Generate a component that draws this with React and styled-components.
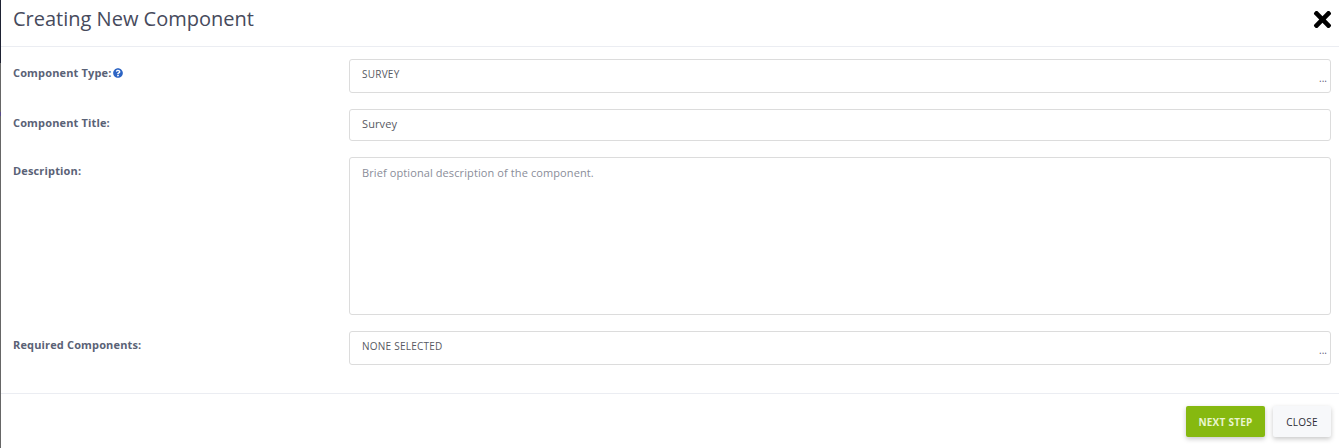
import React from 'react';
import styled, { createGlobalStyle } from 'styled-components';
import { FaTimes, FaQuestionCircle } from 'react-icons/fa';

const GlobalStyle = createGlobalStyle`
  html, body {
    margin: 0;
    padding: 0;
    height: 100%;
    overflow: hidden;
    background: #fff;
  }
  body {
    font-family: "Open Sans", "Liberation Sans", sans-serif;
  }
`;

const Backdrop = styled.div`
  height: 448px;
  padding-left: 1px;
  box-sizing: border-box;
  background: linear-gradient(
    to bottom,
    #1e2233 0,
    #1e2233 63px,
    #666 63px,
    #666 112px,
    #5a4a8a 112px,
    #5a4a8a 116px,
    #666 116px,
    #666 100%
  );
`;

const Modal = styled.div`
  height: 100%;
  background: #fff;
  display: flex;
  flex-direction: column;
`;

const Header = styled.div`
  height: 47px;
  flex: none;
  box-sizing: border-box;
  display: flex;
  align-items: center;
  justify-content: space-between;
  padding: 0 0 8px 12px;
  border-bottom: 1px solid #ebedf2;
`;

const Title = styled.h5`
  margin: 0;
  font-size: 20px;
  font-weight: 400;
  line-height: 38px;
  color: #464a5c;
`;

const CloseIcon = styled.button`
  border: 0;
  padding: 0;
  width: 34px;
  justify-content: center;
  background: none;
  display: flex;
  color: #000;
  font-size: 25px;
`;

const Body = styled.div`
  flex: 1;
  padding: 12px 8px 0 12px;
  display: flex;
  flex-direction: column;
`;

const Row = styled.div`
  display: grid;
  grid-template-columns: 336px 1fr;
  margin-bottom: ${(p) => p.$gap}px;
`;

const Label = styled.label`
  font-size: 11px;
  font-weight: 700;
  letter-spacing: 0.15px;
  line-height: 16px;
  padding-top: ${(p) => p.$top}px;
  color: #5a6276;
  display: flex;
  align-items: flex-start;
  gap: 2px;
`;

const HelpIcon = styled.span`
  display: inline-flex;
  color: #2c64c4;
  font-size: 10px;
  margin-top: 3px;
`;

const Field = styled.div`
  box-sizing: border-box;
  height: ${(p) => p.$height}px;
  border: 1px solid #dcdcdc;
  border-radius: 3px;
  padding: ${(p) => p.$top}px 12px 0;
  font-size: ${(p) => (p.$select ? 10 : 11)}px;
  letter-spacing: ${(p) => (p.$select ? 0.24 : 0.1)}px;
  line-height: 16px;
  color: ${(p) => p.$color};
  position: relative;
`;

const Dots = styled.span`
  position: absolute;
  right: 3px;
  bottom: 8px;
  font-size: 10px;
  line-height: 12px;
  letter-spacing: 0;
  color: #5f5b78;
`;

const Footer = styled.div`
  height: 55px;
  flex: none;
  box-sizing: border-box;
  border-top: 1px solid #ebedf2;
  display: flex;
  justify-content: flex-end;
  align-items: flex-start;
  gap: 8px;
  padding: 12px 8px 0 0;
`;

const Button = styled.button`
  height: 31px;
  border: 0;
  border-radius: 2px;
  padding: 0;
  font-family: inherit;
  font-size: 10px;
  letter-spacing: 0.25px;
  font-weight: ${(p) => (p.$primary ? 700 : 500)};
  width: ${(p) => (p.$primary ? 79 : 58)}px;
  color: ${(p) => (p.$primary ? '#e9f5cf' : '#2d2d35')};
  background: ${(p) => (p.$primary ? '#86b910' : '#f7f8fa')};
  box-shadow: 0 2px 5px rgba(0, 0, 0, 0.22);
`;

const rows = [
  { label: 'Component Type:', help: true, value: 'SURVEY', select: true, height: 34, gap: 16, top: 6, labelTop: 6 },
  { label: 'Component Title:', value: 'Survey', height: 32, gap: 16, top: 6, labelTop: 6 },
  { label: 'Description:', value: 'Brief optional description of the component.', height: 158, gap: 16, top: 7, labelTop: 6, placeholder: true },
  { label: 'Required Components:', value: 'NONE SELECTED', select: true, height: 34, gap: 0, top: 6, labelTop: 6 },
];

export default function App() {
  return (
    <>
      <GlobalStyle />
      <Backdrop>
        <Modal>
          <Header>
            <Title>Creating New Component</Title>
            <CloseIcon aria-label="Close"><FaTimes /></CloseIcon>
          </Header>
          <Body>
            {rows.map((r) => (
              <Row key={r.label} $gap={r.gap}>
                <Label $top={r.labelTop}>
                  {r.label}
                  {r.help && <HelpIcon><FaQuestionCircle /></HelpIcon>}
                </Label>
                <Field
                  $height={r.height}
                  $top={r.top}
                  $select={r.select}
                  $color={r.placeholder ? '#8a8d99' : '#575962'}
                >
                  {r.value}
                  {r.select && <Dots>...</Dots>}
                </Field>
              </Row>
            ))}
          </Body>
          <Footer>
            <Button $primary>NEXT STEP</Button>
            <Button>CLOSE</Button>
          </Footer>
        </Modal>
      </Backdrop>
    </>
  );
}
